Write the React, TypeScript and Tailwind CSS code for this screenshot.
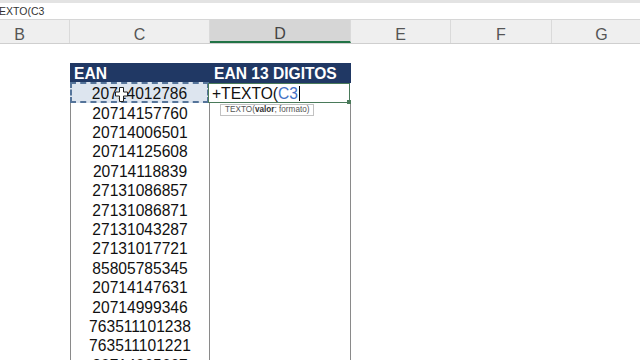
const eans = [
  '20714157760',
  '20714006501',
  '20714125608',
  '20714118839',
  '27131086857',
  '27131086871',
  '27131043287',
  '27131017721',
  '85805785345',
  '20714147631',
  '20714999346',
  '763511101238',
  '763511101221',
  '20714065667',
]

const cols = [
  { l: 'B', w: 'w-[100px] -ml-[30px]' },
  { l: 'C', w: 'w-[140px]' },
  { l: 'D', w: 'w-[141px]', on: true },
  { l: 'E', w: 'w-[100px]' },
  { l: 'F', w: 'w-[101px]' },
  { l: 'G', w: 'w-[100px]' },
]

function CellCursor() {
  // cruz blanca de Excel
  return (
    <svg width="13" height="15" viewBox="0 0 13 15" className="absolute left-[43px] top-[3px]" aria-hidden="true">
      <path d="M4.5 0.5h4v4.5h4v4h-4v5.5h-4v-5.5h-4v-4h4z" fill="#fff" stroke="#222" strokeWidth="1" />
    </svg>
  )
}

export default function App() {
  return (
    <div className="w-[640px] h-[360px] overflow-hidden bg-white font-['Liberation_Sans',Arial,sans-serif] relative">
      {/* barra de formulas */}
      <div className="h-[20px] border-t-[3px] border-[#e3e3e3] border-b border-b-[#d6d6d6] flex items-center pt-[2px] text-[10.5px] text-[#333] -ml-[1px]">
        EXTO(C3
      </div>

      {/* encabezados de columna */}
      <div className="flex h-[24px] bg-[#efefef] border-b border-[#cfcfcf]">
        {cols.map((c) => (
          <div
            key={c.l}
            className={`${c.w} shrink-0 flex items-center justify-center pt-[6px] text-[16px] leading-[16px] border-r border-[#dadada] ${
              c.on ? 'bg-[#d6d6d6] border-b-2 border-b-[#217346] text-[#444]' : 'text-[#555]'
            }`}
          >
            {c.l}
          </div>
        ))}
      </div>

      {/* fila vacia */}
      <div className="h-[19px]" />

      {/* tabla */}
      <div className="ml-[70px] w-[281px] text-[15.6px] text-[#111]">
        <div className="flex h-[20px] bg-[#203864] text-white font-bold">
          <div className="w-[140px] pl-[4px] pt-[1px] flex items-center">EAN</div>
          <div className="w-[141px] pl-[4px] pt-[1px] flex items-center">EAN 13 DIGITOS</div>
        </div>

        <div className="flex h-[19.6px] border-l border-[#8a8a8a]">
          <div className="w-[139px] relative bg-[#dde5ef] border-2 border-dashed border-[#55749a] -ml-[1px] -mt-[1px] flex items-center justify-center pt-[2px]">
            20714012786
            <CellCursor />
          </div>
          <div className="w-[142px] relative border border-[#4a7a5a] -ml-[1px] flex items-center pl-[3px] pt-[1px]">
            +TEXTO(<span className="text-[#4472c4]">C3</span>
            <span className="w-px h-[15px] bg-black ml-[1px]" />
            <span className="absolute -right-[2px] -bottom-[2px] w-[4px] h-[4px] bg-[#4a7a5a]" />
            <div className="absolute left-[11px] top-[20px] h-[12px] pl-[4px] pr-[3px] border border-[#c2c2c2] bg-white text-[8.2px] leading-[10px] text-[#555] whitespace-nowrap z-10">
              TEXTO(<b className="text-[#333]">valor</b>; formato)
            </div>
          </div>
        </div>

        {eans.map((e) => (
          <div key={e} className="flex h-[19.4px] border-l border-[#8a8a8a]">
            <div className="w-[139px] border-r border-[#8a8a8a] flex items-center justify-center pt-[2px]">{e}</div>
            <div className="w-[141px] border-r border-[#8a8a8a]" />
          </div>
        ))}
      </div>
    </div>
  )
}
